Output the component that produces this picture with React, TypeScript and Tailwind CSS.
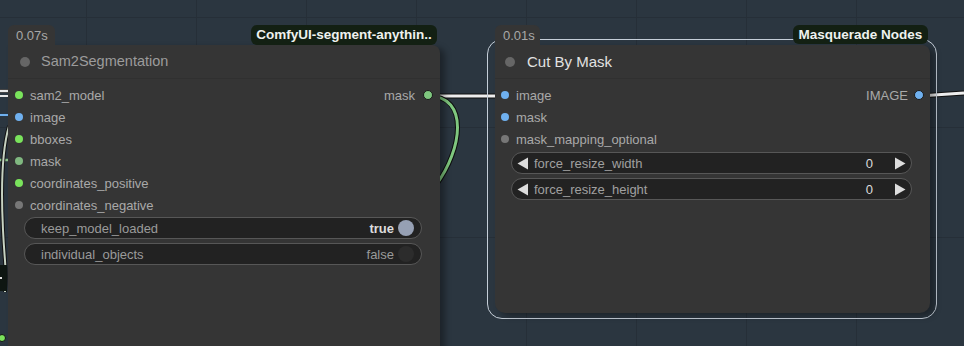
import React from "react";

function InRow({ dot, label }: { dot: string; label: string }) {
  return (
    <div className="flex items-center h-[22px]">
      <div className={`w-[8px] h-[8px] rounded-full ${dot}`} />
      <span className="ml-[7px] text-[13px] text-[#a9a9a9] leading-none">{label}</span>
    </div>
  );
}

function Toggle({ label, value, on }: { label: string; value: string; on: boolean }) {
  return (
    <div className="flex items-center h-[22px] ml-[16px] mr-[18px] rounded-full bg-[#222222] border border-[#575757] pl-[16px] pr-[7px]">
      <span className="text-[13px] text-[#9a9a9a] leading-none">{label}</span>
      <span
        className={
          on
            ? "ml-auto text-[13px] font-bold text-[#dcdcdc] leading-none"
            : "ml-auto text-[13px] text-[#9a9a9a] leading-none"
        }
      >
        {value}
      </span>
      <div
        className={
          on
            ? "ml-[4px] w-[16px] h-[16px] rounded-full bg-[#96a0b4]"
            : "ml-[4px] w-[16px] h-[16px] rounded-full bg-[#2c2c2c]"
        }
      />
    </div>
  );
}

function Arrow({ dir }: { dir: "l" | "r" }) {
  return (
    <svg width="12" height="13" viewBox="0 0 12 13">
      {dir === "l" ? (
        <polygon points="11,0.5 11,12.5 0.5,6.5" fill="#dddddd" />
      ) : (
        <polygon points="1,0.5 1,12.5 11.5,6.5" fill="#dddddd" />
      )}
    </svg>
  );
}

function Number({ label }: { label: string }) {
  return (
    <div className="flex items-center h-[22px] ml-[16px] mr-[18px] rounded-full bg-[#222222] border border-[#575757] pl-[5px] pr-[5px]">
      <Arrow dir="l" />
      <span className="ml-[5px] text-[13px] text-[#a0a0a0] leading-none">{label}</span>
      <span className="ml-auto text-[13px] text-[#dcdcdc] leading-none">0</span>
      <div className="ml-[21px]">
        <Arrow dir="r" />
      </div>
    </div>
  );
}

export default function App() {
  return (
    <div className="relative w-[964px] h-[346px] overflow-hidden bg-[#2b3640] bg-[linear-gradient(to_right,#262f38_1px,transparent_1px),linear-gradient(to_bottom,#262f38_1px,transparent_1px)] bg-[size:110px_110px] bg-[position:86px_17px] font-['Liberation_Sans',Arial,sans-serif]">
      {/* wires layer */}
      <svg className="absolute inset-0" width="964" height="346">
        <path d="M0 91 H10" stroke="#111" strokeWidth="4" />
        <path d="M0 91 H10" stroke="#e8e8e8" strokeWidth="2.5" />
        <path d="M0 96 H10" stroke="#e8e8e8" strokeWidth="2" />
        <path d="M0 115 H10" stroke="#111" strokeWidth="4" />
        <path d="M0 115 H10" stroke="#6fb0ef" strokeWidth="2.5" />
        <path d="M0 160 H10" stroke="#8bc38b" strokeWidth="2.5" />
        <path d="M9 126 C2 150, 1 190, 3 230 S 7 268, 5 292" stroke="#111" strokeWidth="4" fill="none" />
        <path d="M9 126 C2 150, 1 190, 3 230 S 7 268, 5 292" stroke="#c6d2c2" strokeWidth="2" fill="none" />
        <rect x="0" y="265" width="7" height="26" fill="#0e1612" />
        <rect x="0" y="277" width="2" height="2" fill="#e0e0e0" />
        <circle cx="2" cy="338" r="3.5" fill="#7ae35c" stroke="#111" strokeWidth="1" />

        <path d="M430 96 H505" stroke="#111" strokeWidth="5" />
        <path d="M430 96 H505" stroke="#eeeeee" strokeWidth="3" />
        <path d="M428 96 C470 96, 462 150, 436 185" stroke="#0d0d0d" strokeWidth="5" fill="none" />
        <path d="M428 96 C470 96, 462 150, 436 185" stroke="#7fc77f" strokeWidth="3" fill="none" />
        <path d="M919 96 L964 93" stroke="#111" strokeWidth="5" />
        <path d="M919 96 L964 93" stroke="#eeeeee" strokeWidth="3" />
      </svg>

      {/* Left node */}
      <div className="absolute left-[8px] top-[25px] w-[432px]">
        <div className="flex items-end justify-between h-[20px]">
          <div className="h-[20px] w-[47px] pl-[8px] bg-[#353535] rounded-t-[6px] text-[13px] text-[#a8a8a8] leading-[22px]">
            0.07s
          </div>
          <div className="h-[20px] w-[186px] mr-[3px] bg-[#132013] rounded-[6px] text-[13.5px] font-bold text-[#eef2ee] leading-[20px] text-center">
            ComfyUI-segment-anythin..
          </div>
        </div>
        <div className="h-[310px] bg-[#353535] rounded-tr-[8px] shadow-[5px_3px_6px_rgba(0,0,0,0.35)]">
          <div className="flex items-center h-[34px] border-b border-[#303030]">
            <div className="ml-[12px] w-[10px] h-[10px] rounded-full bg-[#666666]" />
            <span className="ml-[11px] text-[14.5px] text-[#9c9c9c] leading-none">Sam2Segmentation</span>
          </div>
          <div className="relative pt-[5px]">
            <div className="absolute right-[7px] top-[5px] flex items-center h-[22px]">
              <span className="text-[13px] text-[#a9a9a9] leading-none">mask</span>
              <div className="ml-[8px] w-[10px] h-[10px] rounded-full bg-[#7fc77f] border-[1.5px] border-[#1a1a1a]" />
            </div>
            <div className="pl-[7px]">
              <InRow dot="bg-[#7ae35c]" label="sam2_model" />
              <InRow dot="bg-[#6fb0ef]" label="image" />
              <InRow dot="bg-[#7ae35c]" label="bboxes" />
              <InRow dot="bg-[#80b880]" label="mask" />
              <InRow dot="bg-[#7ae35c]" label="coordinates_positive" />
              <InRow dot="bg-[#777777]" label="coordinates_negative" />
            </div>
            <div className="mt-[1px] flex flex-col gap-[4px]">
              <Toggle label="keep_model_loaded" value="true" on />
              <Toggle label="individual_objects" value="false" on={false} />
            </div>
          </div>
        </div>
      </div>

      {/* Right node selection outline */}
      <div className="absolute left-[487px] top-[39px] w-[450px] h-[280px] rounded-[15px] border-[1.5px] border-[#c5ced8]" />

      {/* Right node */}
      <div className="absolute left-[495px] top-[25px] w-[435px]">
        <div className="flex items-end justify-between h-[20px]">
          <div className="h-[20px] w-[45px] pl-[8px] bg-[#353535] rounded-t-[6px] text-[13px] text-[#a8a8a8] leading-[22px]">
            0.01s
          </div>
          <div className="h-[19px] w-[135px] mr-[2px] mb-[1px] bg-[#132013] rounded-[6px] text-[13.5px] font-bold text-[#eef2ee] leading-[19px] text-center">
            Masquerade Nodes
          </div>
        </div>
        <div className="h-[268px] bg-[#353535] rounded-tr-[8px] rounded-b-[10px] shadow-[5px_3px_6px_rgba(0,0,0,0.35)]">
          <div className="flex items-center h-[34px] border-b border-[#303030]">
            <div className="ml-[10px] w-[10px] h-[10px] rounded-full bg-[#666666]" />
            <span className="ml-[12px] text-[15px] text-[#e2e2e2] leading-none">Cut By Mask</span>
          </div>
          <div className="relative pt-[5px]">
            <div className="absolute right-[6px] top-[5px] flex items-center h-[22px]">
              <span className="text-[13px] text-[#a9a9a9] leading-none">IMAGE</span>
              <div className="ml-[6px] w-[10px] h-[10px] rounded-full bg-[#6fb0ef] border-[1.5px] border-[#1a1a1a]" />
            </div>
            <div className="pl-[6px]">
              <InRow dot="bg-[#6fb0ef]" label="image" />
              <InRow dot="bg-[#6fb0ef]" label="mask" />
              <InRow dot="bg-[#777777]" label="mask_mapping_optional" />
            </div>
            <div className="mt-[2px] flex flex-col gap-[4px]">
              <Number label="force_resize_width" />
              <Number label="force_resize_height" />
            </div>
          </div>
        </div>
      </div>
    </div>
  );
}
